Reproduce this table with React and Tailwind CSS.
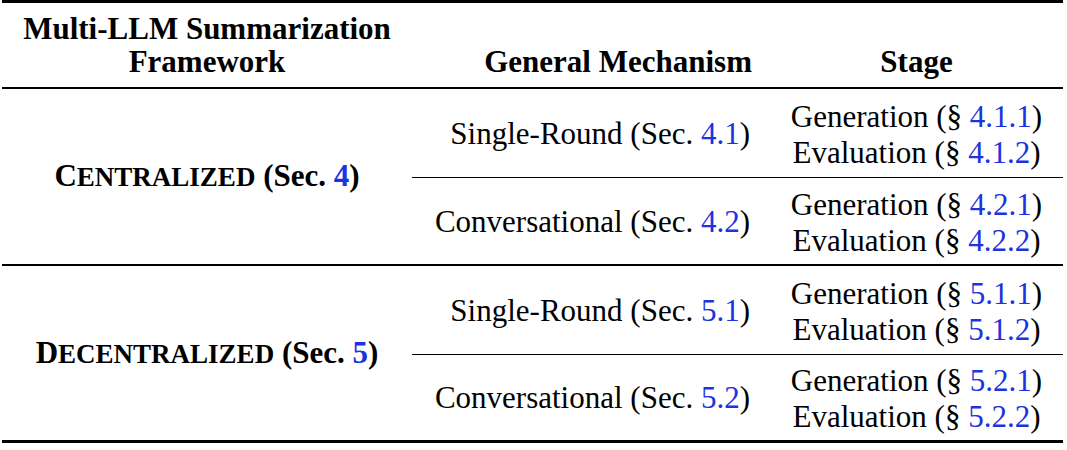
const groups = [
  {
    first: 'C',
    rest: 'ENTRALIZED',
    sec: '4',
    rows: [
      { mech: 'Single-Round', sec: '4.1', h: 'h-[88px]' },
      { mech: 'Conversational', sec: '4.2', h: 'h-[87px]' },
    ],
  },
  {
    first: 'D',
    rest: 'ECENTRALIZED',
    sec: '5',
    rows: [
      { mech: 'Single-Round', sec: '5.1', h: 'h-[88px]' },
      { mech: 'Conversational', sec: '5.2', h: 'h-[86px]' },
    ],
  },
]

const Ref = ({ children }) => <span className="text-[#1c33e0]">{children}</span>

const StageCell = ({ sec }) => (
  <div className="flex-1 flex flex-col items-center justify-center leading-[36px] pt-[3px]">
    <div>
      Generation (§ <Ref>{sec}.1</Ref>)
    </div>
    <div>
      Evaluation (§ <Ref>{sec}.2</Ref>)
    </div>
  </div>
)

const App = () => {
  return (
    <div className="w-[1067px] h-[450px] bg-white pl-[2px] text-black font-['Liberation_Serif',serif] text-[31px]">
      <div className="w-[1061px] border-t-[3px] border-black">
        {/* header */}
        <div className="flex h-[86px] font-bold leading-[33px] border-b-2 border-black">
          <div className="w-[410px] flex flex-col items-center justify-end pb-[9px]">
            <div>Multi-LLM Summarization</div>
            <div>Framework</div>
          </div>
          <div className="w-[358px] flex items-end justify-end pb-[9px] pr-[18px]">General Mechanism</div>
          <div className="flex-1 flex items-end justify-center pb-[9px]">Stage</div>
        </div>

        {groups.map((g, gi) => (
          <div
            key={g.first}
            className={gi > 0 ? 'flex border-t-2 border-black' : 'flex'}
          >
            <div className="w-[410px] flex items-center justify-center font-bold">
              <p>
                {g.first}
                <span className="text-[27px]">{g.rest}</span> (Sec. <Ref>{g.sec}</Ref>)
              </p>
            </div>
            <div className="flex-1 flex flex-col">
              {g.rows.map((r, ri) => (
                <div
                  key={r.sec}
                  className={`flex ${r.h} ${ri > 0 ? 'border-t border-black' : ''}`}
                >
                  <div className="w-[358px] flex items-center justify-end pr-[20px] pt-[2px]">
                    <p>
                      {r.mech} (Sec. <Ref>{r.sec}</Ref>)
                    </p>
                  </div>
                  <StageCell sec={r.sec} />
                </div>
              ))}
            </div>
          </div>
        ))}
        <div className="border-t-[3px] border-black" />
      </div>
    </div>
  )
}

export default App
